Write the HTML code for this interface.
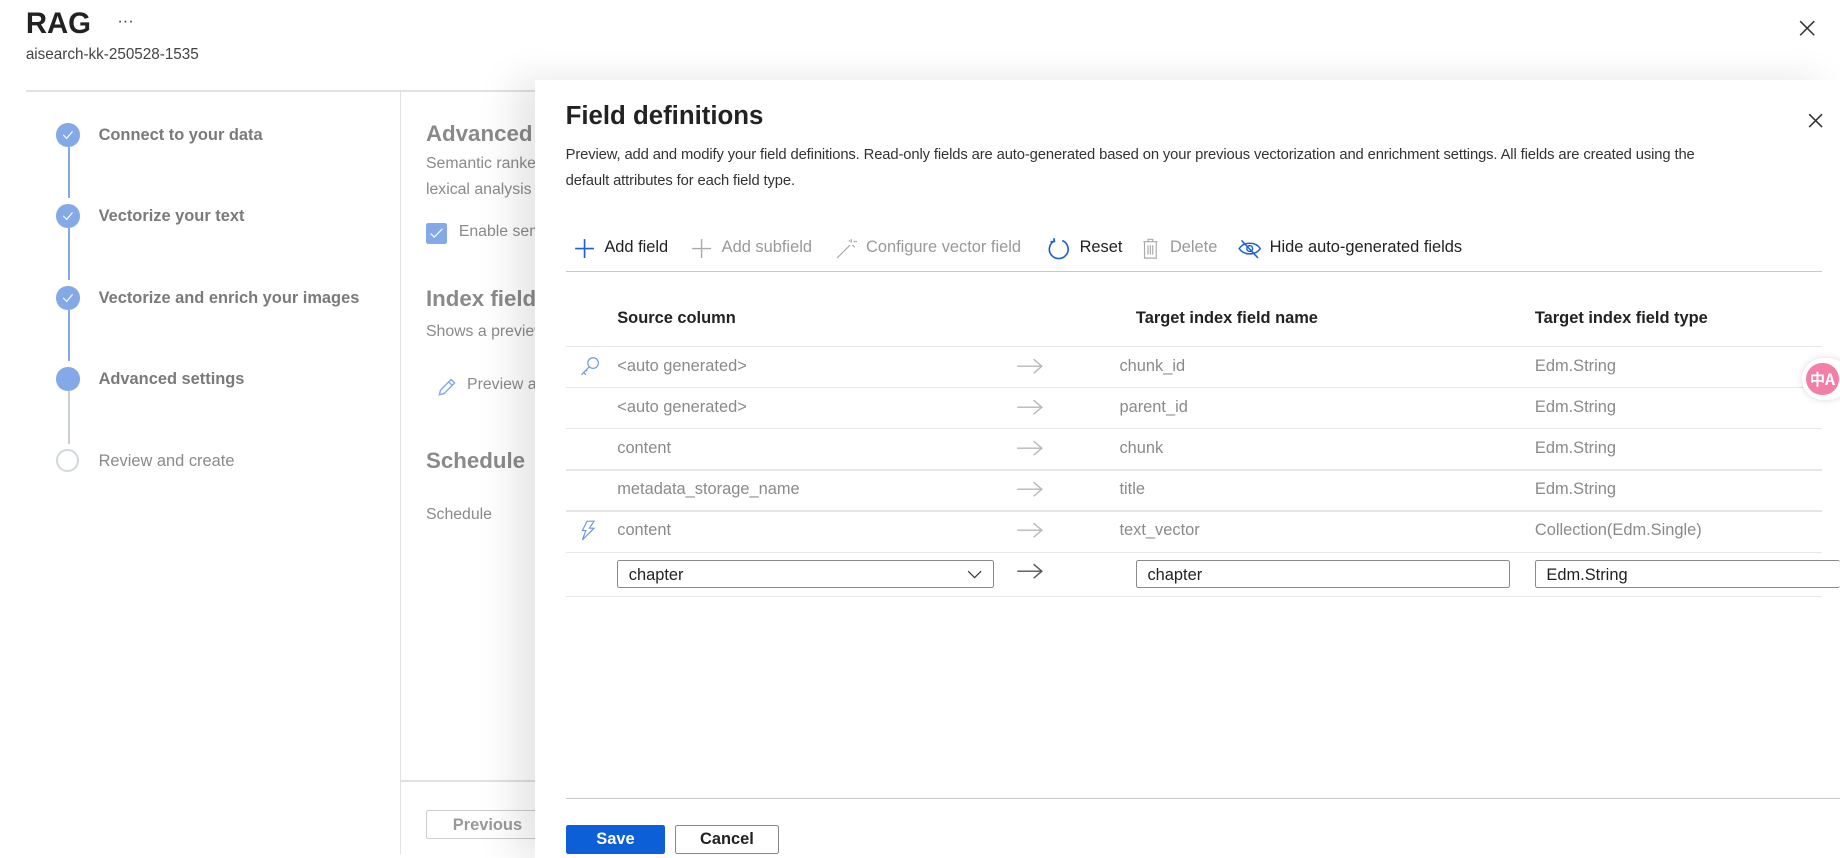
<!DOCTYPE html>
<html><head><meta charset="utf-8"><style>
html,body{margin:0;padding:0;background:#fff;overflow:hidden;width:1840px;height:858px}
#w{position:relative;width:1568px;height:732px;zoom:1.17347;font-family:"Liberation Sans",sans-serif;color:#222;overflow:hidden}
.a{position:absolute;white-space:nowrap}
.step{position:absolute;left:84px;font-size:14px;font-weight:bold;color:#7a7a7a}
.c{position:absolute;left:48px;width:20px;height:20px;border-radius:50%;background:#84a9e8}
.c svg{position:absolute;left:5px;top:5px}
.vl{position:absolute;left:58px;width:2px;background:#84a9e8}
.mid{color:#8a8a8a;font-size:13.5px}
.h2{font-size:19px;font-weight:bold;color:#8a8a8a}
#panel{position:absolute;left:456px;top:68px;width:1112px;height:664px;background:#fff;box-shadow:-18px 0 30px rgba(0,0,0,.10)}
#pi{position:absolute;left:0;top:-68px;width:1112px;height:732px}
.tb{position:absolute;top:203px;font-size:14px}
.hl{position:absolute;left:26px;width:1071px;height:1px;background:#e6e6e6}
.r{position:absolute;font-size:14px;color:#8a8a8a}
.hd{position:absolute;top:263px;font-size:14px;font-weight:bold;color:#222}
.arr{position:absolute;left:410px}
.box{position:absolute;border:1px solid #8a8a8a;border-radius:2px;height:24px;font-size:14px;line-height:24px;padding-left:9px;box-sizing:border-box;color:#222}
</style></head><body><div id="w">
<div class="a" style="left:22px;top:6px;font-size:25px;font-weight:bold;color:#222">RAG</div>
<div class="a" style="left:100px;top:10px;font-size:14px;color:#444">···</div>
<div class="a" style="left:22px;top:39px;font-size:13px;color:#444">aisearch-kk-250528-1535</div>
<div class="a" style="left:22px;top:77px;width:434px;height:1px;background:#e1e1e1"></div>
<div class="a" style="left:341px;top:78px;width:1px;height:650px;background:#e1e1e1"></div>
<div class="a" style="left:341px;top:665px;width:115px;height:1px;background:#e1e1e1"></div>

<div class="vl" style="top:125px;height:44px"></div>
<div class="vl" style="top:194px;height:45px"></div>
<div class="vl" style="top:264px;height:44px"></div>
<div class="vl" style="top:333px;height:45px;background:#c8d0d4"></div>
<div class="c" style="top:105px"><svg width="10" height="10" viewBox="0 0 10 10"><path d="M1 5l3 3 5-6" fill="none" stroke="#fff" stroke-width="1"/></svg></div>
<div class="c" style="top:174px"><svg width="10" height="10" viewBox="0 0 10 10"><path d="M1 5l3 3 5-6" fill="none" stroke="#fff" stroke-width="1"/></svg></div>
<div class="c" style="top:244px"><svg width="10" height="10" viewBox="0 0 10 10"><path d="M1 5l3 3 5-6" fill="none" stroke="#fff" stroke-width="1"/></svg></div>
<div class="c" style="top:313px"></div>
<div class="c" style="top:383px;background:#fff;border:2px solid #d0d8dc;width:16px;height:16px"></div>
<div class="step" style="top:107px">Connect to your data</div>
<div class="step" style="top:176px">Vectorize your text</div>
<div class="step" style="top:246px">Vectorize and enrich your images</div>
<div class="step" style="top:315px">Advanced settings</div>
<div class="step" style="top:385px;font-weight:normal;color:#8a8a8a">Review and create</div>

<div class="a h2" style="left:363px;top:103px">Advanced settings</div>
<div class="a mid" style="left:363px;top:132px">Semantic ranker</div>
<div class="a mid" style="left:363px;top:154px">lexical analysis</div>
<div class="a" style="left:363px;top:190px;width:18px;height:18px;background:#84a9e8;border-radius:2px"><svg width="18" height="18"><path d="M4 9l3 3 7-7" fill="none" stroke="#fff"/></svg></div>
<div class="a mid" style="left:391px;top:190px">Enable semantic</div>
<div class="a h2" style="left:363px;top:244px">Index fields</div>
<div class="a mid" style="left:363px;top:275px">Shows a preview</div>
<div class="a" style="left:372px;top:320px"><svg width="18" height="18"><path d="M2 16l1-4 9-9 3 3-9 9z M10 5l3 3" fill="none" stroke="#84a9e8" stroke-width="1.2"/></svg></div>
<div class="a mid" style="left:398px;top:320px">Preview and edit</div>
<div class="a h2" style="left:363px;top:382px">Schedule</div>
<div class="a mid" style="left:363px;top:431px;color:#8a8a8a">Schedule</div>
<div class="a" style="left:363px;top:690px;width:110px;height:25px;border:1px solid #ccc;border-radius:2px;font-size:14px;font-weight:bold;color:#999;line-height:25px;padding-left:22px;box-sizing:border-box">Previous</div>

<svg class="a" style="left:1533px;top:17px" width="14" height="14"><path d="M1 1l12 12M13 1L1 13" stroke="#333" stroke-width="1.3"/></svg>

<div id="panel"><div id="pi">
<div class="a" style="left:26px;top:87px;font-size:22px;font-weight:bold;color:#222">Field definitions</div>
<svg class="a" style="left:1085px;top:96px" width="13" height="13"><path d="M1 1l11 11M12 1L1 12" stroke="#333" stroke-width="1.3"/></svg>
<div class="a" style="left:26px;top:122px;font-size:12.6px;line-height:22px;color:#333;white-space:normal;width:995px;letter-spacing:-0.1px">Preview, add and modify your field definitions. Read-only fields are auto-generated based on your previous vectorization and enrichment settings. All fields are created using the default attributes for each field type.</div>

<svg class="a" style="left:33px;top:203px" width="18" height="18"><path d="M9 1v16M1 9h16" stroke="#1f5fd0" stroke-width="1.4"/></svg>
<div class="tb" style="left:59px;color:#222">Add field</div>
<svg class="a" style="left:133px;top:203px" width="18" height="18"><path d="M9 1v16M1 9h16" stroke="#aaa" stroke-width="1.2"/></svg>
<div class="tb" style="left:159px;color:#999">Add subfield</div>
<svg class="a" style="left:256px;top:203px" width="18" height="18"><path d="M1 17L12 6M13 1v3M15 3h3M14 6l2 2M11 2l1 1" stroke="#aaa" stroke-width="1"/></svg>
<div class="tb" style="left:282px;color:#999">Configure vector field</div>
<svg class="a" style="left:436px;top:202px" width="20" height="20"><path d="M7 3A8 8 0 1 0 13 3M6 1v3h-3" fill="none" stroke="#1f5fd0" stroke-width="1.4"/></svg>
<div class="tb" style="left:464px;color:#222">Reset</div>
<svg class="a" style="left:516px;top:202px" width="16" height="19"><path d="M2 4h12M6 4V2h4v2M3 4v14h10V4M6 7v8M8 7v8M10 7v8" fill="none" stroke="#aaa" stroke-width="1"/></svg>
<div class="tb" style="left:541px;color:#999">Delete</div>
<svg class="a" style="left:599px;top:203px" width="20" height="18"><path d="M1 9C5 3 15 3 19 9C15 15 5 15 1 9ZM3 2l14 15" fill="none" stroke="#1f5fd0" stroke-width="1.3"/><circle cx="10" cy="9" r="2.5" fill="none" stroke="#1f5fd0" stroke-width="1.2"/></svg>
<div class="tb" style="left:626px;color:#222">Hide auto-generated fields</div>
<div class="a" style="left:26px;top:231px;width:1071px;height:1px;background:#c8c8c8"></div>

<div class="hd" style="left:70px">Source column</div>
<div class="hd" style="left:512px">Target index field name</div>
<div class="hd" style="left:852px">Target index field type</div>
<div class="hl" style="top:295px"></div><div class="hl" style="top:330px"></div><div class="hl" style="top:365px"></div><div class="hl" style="top:400px"></div><div class="hl" style="top:435px"></div><div class="hl" style="top:470px"></div><div class="hl" style="top:508px"></div>

<svg class="a" style="left:37px;top:303px" width="18" height="18"><circle cx="12" cy="6" r="4.5" fill="none" stroke="#6f97e0"/><path d="M9 9L2 16M4 14l2 2M6 12l1 1" stroke="#6f97e0" fill="none"/></svg>
<svg class="a" style="left:38px;top:443px" width="14" height="18"><path d="M6 1h6L8 7h4L2 17l3-8H2z" fill="none" stroke="#6f97e0"/></svg>

<div class="r" style="left:70px;top:304px">&lt;auto generated&gt;</div>
<div class="r" style="left:70px;top:339px">&lt;auto generated&gt;</div>
<div class="r" style="left:70px;top:374px">content</div>
<div class="r" style="left:70px;top:409px">metadata_storage_name</div>
<div class="r" style="left:70px;top:444px">content</div>
<div class="r" style="left:498px;top:304px">chunk_id</div>
<div class="r" style="left:498px;top:339px">parent_id</div>
<div class="r" style="left:498px;top:374px">chunk</div>
<div class="r" style="left:498px;top:409px">title</div>
<div class="r" style="left:498px;top:444px">text_vector</div>
<div class="r" style="left:852px;top:304px">Edm.String</div>
<div class="r" style="left:852px;top:339px">Edm.String</div>
<div class="r" style="left:852px;top:374px">Edm.String</div>
<div class="r" style="left:852px;top:409px">Edm.String</div>
<div class="r" style="left:852px;top:444px">Collection(Edm.Single)</div>
<svg class="arr" style="top:305px" width="24" height="14"><path d="M1 7h21M15 1l7 6-7 6" fill="none" stroke="#b8b8b8" stroke-width="1.2"/></svg>
<svg class="arr" style="top:340px" width="24" height="14"><path d="M1 7h21M15 1l7 6-7 6" fill="none" stroke="#b8b8b8" stroke-width="1.2"/></svg>
<svg class="arr" style="top:375px" width="24" height="14"><path d="M1 7h21M15 1l7 6-7 6" fill="none" stroke="#b8b8b8" stroke-width="1.2"/></svg>
<svg class="arr" style="top:410px" width="24" height="14"><path d="M1 7h21M15 1l7 6-7 6" fill="none" stroke="#b8b8b8" stroke-width="1.2"/></svg>
<svg class="arr" style="top:445px" width="24" height="14"><path d="M1 7h21M15 1l7 6-7 6" fill="none" stroke="#b8b8b8" stroke-width="1.2"/></svg>
<svg class="arr" style="top:480px" width="24" height="14"><path d="M1 7h21M15 1l7 6-7 6" fill="none" stroke="#555" stroke-width="1.2"/></svg>
<div class="box" style="left:70px;top:477px;width:321px">chapter<svg style="position:absolute;right:9px;top:8px" width="13" height="8"><path d="M1 1l5.5 5.5L12 1" fill="none" stroke="#333"/></svg></div>
<div class="box" style="left:512px;top:477px;width:319px">chapter</div>
<div class="box" style="left:852px;top:477px;width:260px;border-right:none">Edm.String</div>

<div class="a" style="left:26px;top:680px;width:1086px;height:1px;background:#c8c8c8"></div>
<div class="a" style="left:26px;top:703px;width:85px;height:25px;background:#0c5fd6;border-radius:2px;color:#fff;font-size:14px;font-weight:bold;text-align:center;line-height:25px">Save</div>
<div class="a" style="left:119px;top:703px;width:89px;height:25px;border:1px solid #888;border-radius:2px;box-sizing:border-box;color:#222;font-size:14px;font-weight:bold;text-align:center;line-height:23px">Cancel</div>
</div></div>
<div class="a" style="left:1536px;top:305px;width:40px;height:36px;border-radius:18px;background:#fff;box-shadow:0 0 6px rgba(0,0,0,.15)"></div>
<div class="a" style="left:1539px;top:309px;width:28px;height:28px;border-radius:50%;background:#f47fa6;color:#fff;font-size:13px;font-weight:bold;text-align:center;line-height:28px;font-family:'Noto Sans CJK SC',sans-serif">中A</div>
</div></body></html>
